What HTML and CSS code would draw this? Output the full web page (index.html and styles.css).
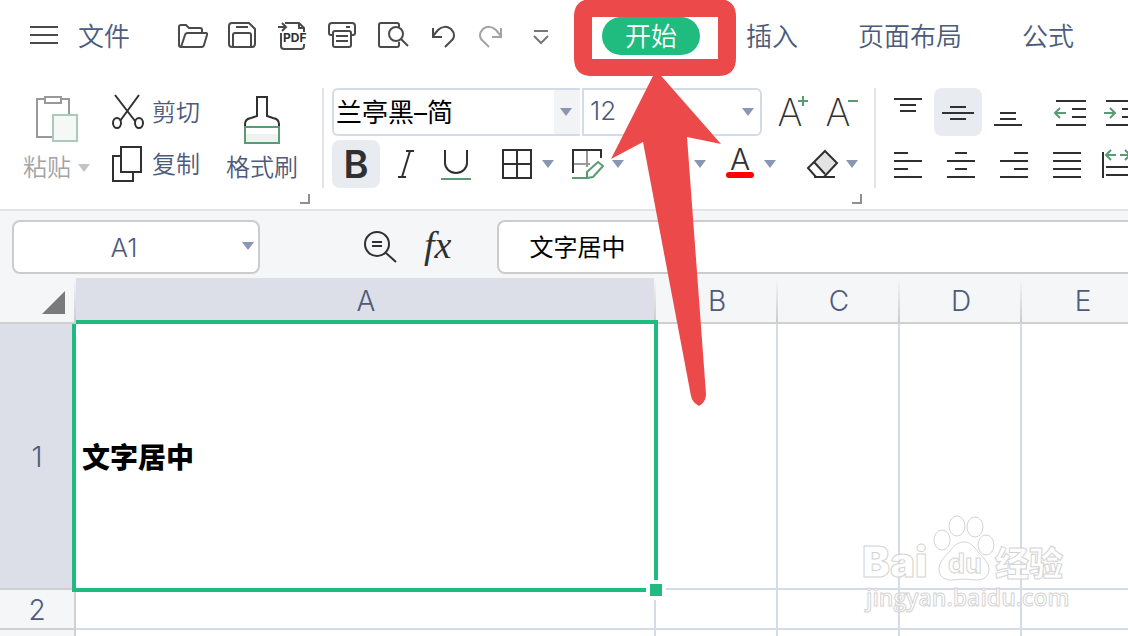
FILE: index.html
```html
<!DOCTYPE html>
<html lang="zh-CN">
  <head>
    <meta charset="UTF-8" />
    <meta name="viewport" content="width=device-width, initial-scale=1.0" />
    <title>表格</title>
    <link rel="stylesheet" href="styles.css">
  </head>
  <body>
    <header class="topbar">
      <button class="menu-btn">
        <svg class="icon" width="28" height="30" viewBox="0 0 28 30"><path d="M0 6h28M0 14h28M0 22h28" /></svg>
        <span class="label">文件</span>
      </button>

      <div class="quick">
        <button aria-label="打开">
          <svg class="icon" width="30" height="30" viewBox="0 0 30 30"><path d="M3 26c-1.500 0-2-1-2-2V6q0-2 2-2h5l3 3h11q2 0 2 2v3M3 26L7 14q.5-2 2.500-2H28q1.500 0 1 2l-3 10q-.5 2-2.500 2z" /></svg>
        </button>
        <button aria-label="保存">
          <svg class="icon" width="30" height="30" viewBox="0 0 30 30"><path d="M4 2h17l6 6v15q0 3-3 3H4q-3 0-3-3V5q0-3 3-3zM5 26V14q0-2 2-2h14q2 0 2 2v12M8 6h12" /></svg>
        </button>
        <button aria-label="输出为PDF">
          <svg class="icon" width="30" height="30" viewBox="0 0 30 30">
            <path d="M7 2h14l5 5v4M21 2v5h5M3 12v13q0 3 3 3h17q3 0 3-3v-2M0 6h8M4 2l4 4-4 4" />
            <text class="pdf-text" x="5" y="21">PDF</text>
          </svg>
        </button>
        <button aria-label="打印">
          <svg class="icon" width="30" height="30" viewBox="0 0 30 30"><path d="M5 14H3q-2 0-2-2V5q0-3 3-3h20q3 0 3 3v7q0 2-2 2h-2M7 10h14q2 0 2 2v12q0 2-2 2H7q-2 0-2-2V12q0-2 2-2zM8 15h12M8 20h12M18 6h4" /></svg>
        </button>
        <button aria-label="打印预览">
          <svg class="icon" width="30" height="30" viewBox="0 0 30 30"><path d="M21 7V4q0-2-2-2H3Q1 2 1 4v20q0 2 2 2h16q2 0 2-2v-3" /><circle cx="18" cy="13" r="7" /><path d="M23 18l7 7" /></svg>
        </button>
        <button aria-label="撤销">
          <svg class="icon" width="30" height="30" viewBox="0 0 30 30"><path d="M5 7v9h9M5 15l5-6c4-4 9-4 13-1 4 4 4 9 0 12l-6 6" /></svg>
        </button>
        <button aria-label="恢复" disabled>
          <svg class="icon" width="30" height="30" viewBox="0 0 30 30"><path d="M23 7v9h-9M23 15l-5-6C14 5 9 5 5 8c-4 4-4 9 0 12l6 6" /></svg>
        </button>
        <button aria-label="更多">
          <svg class="icon more" width="30" height="30" viewBox="0 0 30 30"><path d="M6 10h14M6 15l7 7 7-7" /></svg>
        </button>
      </div>

      <nav class="tabs">
        <button class="tab active"><span class="label">开始</span></button>
        <button class="tab"><span class="label">插入</span></button>
        <button class="tab"><span class="label">页面布局</span></button>
        <button class="tab"><span class="label">公式</span></button>
      </nav>
    </header>

    <section class="ribbon">
      <div class="group clipboard">
        <button class="big-btn" disabled>
          <svg class="icon paste" width="42" height="48" viewBox="0 0 42 48">
            <path d="M9 3H1v38h16M25 3h8v16M9 1h16v6H9z" />
            <path class="mint" d="M17 19h24v26H17z" />
          </svg>
          <span class="with-caret">粘贴<i class="caret"></i></span>
        </button>
        <div class="stack">
          <button class="small-btn">
            <svg class="icon dark" width="32" height="36" viewBox="0 0 32 36"><path d="M3 1l20 26M27 1L8 27" /><ellipse cx="5" cy="29" rx="4" ry="5" /><ellipse cx="27" cy="29" rx="4" ry="5" /></svg>
            <span class="label">剪切</span>
          </button>
          <button class="small-btn">
            <svg class="icon dark" width="32" height="36" viewBox="0 0 32 36"><path d="M9 1h20v25H9zM9 10H1v25h20v-9" /></svg>
            <span class="label">复制</span>
          </button>
        </div>
        <button class="big-btn">
          <svg class="icon dark" width="36" height="48" viewBox="0 0 36 48">
            <path class="brush-fill" d="M2 38h32v8H2z" />
            <path d="M1 31v-3q0-5 6-6l6-2V1h10v19l6 2q6 1 6 6v3" />
            <path class="green" d="M1 31h34v16H1z" />
          </svg>
          <span>格式刷</span>
        </button>
        <i class="launcher"></i>
      </div>

      <div class="group font">
        <div class="row">
          <label class="combo family">
            <select aria-label="字体"><option>兰亭黑–简</option></select>
            <i class="caret"></i>
          </label>
          <label class="combo size">
            <select aria-label="字号"><option>12</option></select>
            <i class="caret"></i>
          </label>
          <button class="grow-btn" aria-label="增大字号">
            <svg class="icon dark" width="32" height="40" viewBox="0 0 32 40"><text class="letter" x="12" y="34">A</text><path class="green" d="M20 9h10M25 4v10" /></svg>
          </button>
          <button class="grow-btn" aria-label="减小字号">
            <svg class="icon dark" width="32" height="40" viewBox="0 0 32 40"><text class="letter" x="12" y="34">A</text><path class="green" d="M22 9h10" /></svg>
          </button>
        </div>
        <div class="row">
          <div class="styles">
            <button class="tool on bold">B</button>
            <button class="tool" aria-label="倾斜">
              <svg class="icon dark" width="16" height="30" viewBox="0 0 16 30"><path d="M8 2h8M0 28h8M12 2L4 28" /></svg>
            </button>
            <button class="tool" aria-label="下划线">
              <svg class="icon dark" width="30" height="32" viewBox="0 0 30 32"><path d="M4 2v13a11 10 0 0 0 22 0V2" /><path class="green" d="M0 31h30" /></svg>
            </button>
          </div>
          <div class="pair">
            <button class="split" aria-label="边框">
              <svg class="icon dark" width="30" height="32" viewBox="0 0 30 32"><path d="M1 2h28v28H1zM15 2v28M1 16h28" /></svg>
              <i class="caret"></i>
            </button>
            <button class="split" aria-label="绘图边框">
              <svg class="icon dark" width="30" height="32" viewBox="0 0 30 32">
                <path class="gray" d="M15 3v16M2 16h16" />
                <path d="M1 25V2h28v8" />
                <path class="green" d="M0 30h15M15 24L26 14l5 4-10 11-6 1z" />
              </svg>
              <i class="caret"></i>
            </button>
          </div>
          <div class="pair">
            <button class="split" aria-label="填充颜色">
              <svg class="icon dark" width="30" height="32" viewBox="0 0 30 32"><path d="M13 4l10 10-9 9-9-9zM4 30h22" /></svg>
              <i class="caret"></i>
            </button>
            <button class="split" aria-label="字体颜色">
              <svg class="icon dark" width="30" height="32" viewBox="0 0 30 32"><text class="letter small" x="16" y="22">A</text><path class="red" d="M5 27h22" /></svg>
              <i class="caret"></i>
            </button>
          </div>
          <button class="split clear" aria-label="清除">
            <svg class="icon dark" width="32" height="32" viewBox="0 0 32 32"><path class="eraser" d="M19 3l12 12-12 12L8 14z" /><path d="M19 3l12 12-13 14H10L2 20zM8 14l11 12M8 29h21" /></svg>
            <i class="caret"></i>
          </button>
        </div>
        <i class="launcher"></i>
      </div>

      <div class="group align">
        <div class="row">
          <button class="tool" aria-label="顶端对齐">
            <svg class="icon dark" width="28" height="32" viewBox="0 0 28 32"><path d="M0 3h28M6 9h16M6 15h16" /></svg>
          </button>
          <button class="tool on" aria-label="垂直居中">
            <svg class="icon dark" width="32" height="32" viewBox="0 0 32 32"><path d="M8 11h16M0 17h32M8 23h16" /></svg>
          </button>
          <button class="tool" aria-label="底端对齐">
            <svg class="icon dark" width="28" height="32" viewBox="0 0 28 32"><path d="M6 17h16M6 23h16M0 29h28" /></svg>
          </button>
          <button class="tool indent" aria-label="减少缩进量">
            <svg class="icon dark" width="32" height="32" viewBox="0 0 32 32"><path d="M2 5h30M18 13h14M18 21h14M2 29h30" /><path class="green" d="M12 17H1M6 12l-5 5 5 5" /></svg>
          </button>
          <button class="tool" aria-label="增加缩进量">
            <svg class="icon dark" width="32" height="32" viewBox="0 0 32 32"><path d="M2 5h30M18 13h14M18 21h14M2 29h30" /><path class="green" d="M0 17h11M6 12l5 5-5 5" /></svg>
          </button>
        </div>
        <div class="row wide">
          <button class="tool" aria-label="左对齐">
            <svg class="icon dark" width="28" height="32" viewBox="0 0 28 32"><path d="M0 5h14M0 13h28M0 21h14M0 29h28" /></svg>
          </button>
          <button class="tool" aria-label="水平居中">
            <svg class="icon dark" width="28" height="32" viewBox="0 0 28 32"><path d="M8 5h12M0 13h28M8 21h12M0 29h28" /></svg>
          </button>
          <button class="tool" aria-label="右对齐">
            <svg class="icon dark" width="28" height="32" viewBox="0 0 28 32"><path d="M14 5h14M0 13h28M14 21h14M0 29h28" /></svg>
          </button>
          <button class="tool" aria-label="两端对齐">
            <svg class="icon dark" width="28" height="32" viewBox="0 0 28 32"><path d="M0 5h28M0 13h28M0 21h28M0 29h28" /></svg>
          </button>
          <button class="tool" aria-label="分散对齐">
            <svg class="icon dark" width="36" height="32" viewBox="0 0 36 32"><path d="M1 4v26M35 4v26M4 19h28M4 27h28" /><path class="green" d="M14 7H5M9 2L4 7l5 5M18 7h9M23 2l5 5-5 5" /></svg>
          </button>
        </div>
      </div>
    </section>

    <section class="formula-bar">
      <label class="name-box">
        <input type="text" value="A1" aria-label="名称框" />
        <i class="caret"></i>
      </label>
      <div class="formula-tools">
        <button aria-label="浏览公式结果">
          <svg class="icon dark" width="32" height="32" viewBox="0 0 32 32"><circle cx="13" cy="13" r="12" /><path d="M22 22l10 9M8 11h10M8 15h10" /></svg>
        </button>
        <button class="fx">fx</button>
      </div>
      <input class="formula-input" type="text" value="文字居中" aria-label="编辑栏" />
    </section>

    <main class="sheet">
      <table>
        <colgroup>
          <col class="col-head" />
          <col class="col-a" />
          <col class="col" /><col class="col" /><col class="col" /><col class="col" />
        </colgroup>
        <thead>
          <tr>
            <th class="corner"><svg width="23" height="23" viewBox="0 0 23 23"><path d="M23 0v23H0z" /></svg></th>
            <th class="selected">A</th>
            <th>B</th>
            <th>C</th>
            <th>D</th>
            <th>E</th>
          </tr>
        </thead>
        <tbody>
          <tr class="tall">
            <th class="selected">1</th>
            <td class="current">文字居中<div class="selection"></div></td>
            <td></td><td></td><td></td><td></td>
          </tr>
          <tr>
            <th>2</th>
            <td></td><td></td><td></td><td></td><td></td>
          </tr>
          <tr>
            <th></th>
            <td></td><td></td><td></td><td></td><td></td>
          </tr>
        </tbody>
      </table>
    </main>

    <!-- red frame and arrow pointing at the active tab -->
    <svg class="pointer" width="170" height="410" viewBox="570 0 170 410">
      <path fill-rule="evenodd" d="M592 -1H718Q736 -1 736 17V58Q736 76 718 76H592Q574 76 574 58V17Q574 -1 592 -1zM592 17V59H718V17z" />
      <path d="M656 70L721 144 687 137 706 394Q706 402 699 406 692 402 691 396L643 142 611 159z" />
    </svg>

    <svg class="watermark" width="208" height="104" viewBox="0 0 208 104">
      <text class="wm-logo" x="0" y="65">Bai</text>
      <ellipse cx="80" cy="28" rx="8" ry="10" />
      <ellipse cx="95" cy="14" rx="8" ry="10" />
      <ellipse cx="113" cy="15" rx="8" ry="10" />
      <ellipse cx="124" cy="33" rx="8" ry="10" />
      <path d="M102 30c7 0 11 6 14 10s11 9 11 17-6 11-12 11c-5 0-9-1-13-1s-8 1-13 1c-7 0-12-4-12-11s6-12 10-17 8-10 15-10z" />
      <text class="wm-du" x="86" y="61">du</text>
      <text class="wm-cn" x="133" y="64">经验</text>
      <text class="wm-url" x="4" y="94">jingyan.baidu.com</text>
    </svg>
  </body>
</html>
```

FILE: styles.css
```css
* {
  margin: 0;
  padding: 0;
  box-sizing: border-box;
}

body {
  height: 100vh;
  display: flex;
  flex-direction: column;
  position: relative;
  overflow: hidden;
  background: #fff;
  color: #4c5b7b;
  font-family: "Inter", "Noto Sans CJK SC", sans-serif;
  font-weight: 350;
}

button,
input,
select {
  font: inherit;
  color: inherit;
  border: none;
  background: transparent;
  outline: none;
}

button {
  display: flex;
  align-items: center;
  justify-content: center;
  flex-shrink: 0;
  white-space: nowrap;
  cursor: pointer;
}

.label {
  padding-bottom: 4px;
}

/* icons */
.icon {
  display: block;
  flex-shrink: 0;
  fill: none;
  stroke: #4a4a4a;
  stroke-width: 2;
  overflow: visible;
}

.icon.dark {
  stroke: #303032;
}

.icon.more {
  stroke: #777;
}

.icon .green {
  stroke: #5a9b74;
}

.icon .gray {
  stroke: #999;
}

.icon .mint {
  stroke: #a9cbb8;
  fill: #f4f9f7;
}

.icon .red {
  stroke: #f00;
  stroke-width: 6;
  stroke-linecap: round;
}

.icon .brush-fill {
  fill: #edf3ef;
  stroke: none;
}

.icon .eraser {
  fill: #e3e3e3;
  stroke: none;
}

.icon text {
  stroke: none;
  fill: #303032;
}

.icon .letter {
  font-size: 38px;
  font-weight: 200;
  text-anchor: middle;
}

.icon .letter.small {
  font-size: 30px;
  font-weight: 300;
}

.icon .pdf-text {
  font-size: 12px;
  font-weight: 700;
}

.icon.paste {
  stroke: #999;
}

.caret {
  flex-shrink: 0;
  width: 12px;
  height: 8px;
  background: #8997b3;
  clip-path: polygon(0 0, 100% 0, 50% 100%);
}

/* top bar */
.topbar {
  display: flex;
  align-items: center;
  height: 72px;
  padding-left: 30px;
  font-size: 26px;
  flex-shrink: 0;
}

.menu-btn {
  gap: 20px;
}

.quick {
  display: flex;
  gap: 20px;
  margin-left: 48px;
}

.quick button:disabled {
  opacity: 0.5;
}

.tabs {
  display: flex;
  gap: 14px;
  margin-left: 44px;
}

.tab {
  height: 38px;
  padding: 0 23px;
  border-radius: 19px;
}

.tab.active {
  margin-right: 9px;
  background: #20bb7e;
  color: #fff;
}

/* ribbon */
.ribbon {
  display: flex;
  flex-shrink: 0;
  padding: 16px 0 21px 23px;
  border-bottom: 2px solid #e1e3e9;
  font-size: 24px;
}

.group {
  display: flex;
  flex-shrink: 0;
  position: relative;
}

.clipboard {
  padding-right: 24px;
  border-right: 2px solid #e4e4e6;
}

.font,
.align {
  flex-direction: column;
  gap: 4px;
  padding-left: 8px;
}

.font {
  padding-right: 16px;
  border-right: 2px solid #e4e4e6;
}

.launcher {
  position: absolute;
  right: 12px;
  bottom: -16px;
  width: 10px;
  height: 10px;
  border: solid #8f8f8f;
  border-width: 0 2px 2px 0;
}

.big-btn {
  flex-direction: column;
  justify-content: space-between;
  padding-top: 8px;
  line-height: 40px;
}

.big-btn:disabled {
  color: #a3a3a5;
}

.big-btn:disabled .caret {
  background: #c4c4c6;
}

.with-caret {
  display: flex;
  align-items: center;
  gap: 7px;
}

.stack {
  display: grid;
  gap: 4px;
  margin: 0 26px 0 22px;
}

.small-btn {
  gap: 8px;
  height: 48px;
}

.row {
  display: flex;
  align-items: center;
  height: 48px;
}

.combo {
  display: flex;
  position: relative;
  height: 48px;
  border: 2px solid #d3dbe9;
  background: #fff;
}

.combo select {
  width: 100%;
  padding-left: 6px;
  padding-bottom: 4px;
  appearance: none;
  font-size: 26px;
}

.combo .caret {
  position: absolute;
  right: 8px;
  top: 18px;
}

.family {
  width: 248px;
  border-radius: 6px 0 0 6px;
  border-right: none;
  margin-right: 2px;
  background: linear-gradient(to left, #f1f3f5 26px, #fff 26px);
}

.family select {
  padding-left: 2px;
  padding-bottom: 0;
  color: #000;
  font-weight: 400;
}

.size {
  width: 180px;
  border-radius: 0 6px 6px 0;
}

.size .caret {
  right: 6px;
}

.grow-btn {
  margin-left: 16px;
}

.tool {
  width: 48px;
  height: 48px;
  border-radius: 8px;
}

.tool.on {
  background: #e8ebf0;
}

.bold {
  color: #303032;
  font-size: 38px;
  font-weight: 600;
}

.styles {
  display: flex;
  gap: 2px;
  margin-right: 22px;
}

.pair {
  display: flex;
  gap: 18px;
  margin-right: 30px;
}

.split {
  gap: 10px;
}

.split.clear {
  gap: 8px;
}

.align .row {
  gap: 2px;
}

.align .row.wide {
  gap: 5px;
}

.indent {
  margin-left: 12px;
}

/* formula bar */
.formula-bar {
  display: flex;
  flex-shrink: 0;
  padding: 9px 0 4px 12px;
  background: #f5f6f8;
}

.name-box {
  display: flex;
  position: relative;
  width: 248px;
  flex-shrink: 0;
}

.name-box input {
  width: 100%;
  height: 54px;
  padding-right: 24px;
  border: 2px solid #ccc;
  border-radius: 8px;
  background: #fff;
  font-size: 26px;
  text-align: center;
}

.name-box .caret {
  position: absolute;
  right: 6px;
  top: 22px;
}

.formula-tools {
  display: flex;
  align-items: center;
  gap: 28px;
  margin: 0 46px 0 104px;
}

.fx {
  color: #303032;
  font-family: "Liberation Serif", serif;
  font-size: 38px;
  font-style: italic;
  line-height: 38px;
  padding-bottom: 4px;
}

.formula-input {
  flex: 1;
  min-width: 0;
  height: 54px;
  padding-left: 30px;
  padding-bottom: 4px;
  border: 2px solid #ccc;
  border-right: none;
  border-radius: 8px 0 0 8px;
  background: #fff;
  color: #000;
  font-size: 24px;
  font-weight: 400;
}

/* sheet */
.sheet {
  flex: 1;
  min-height: 0;
  overflow: hidden;
}

table {
  width: 1144px;
  min-width: 100%;
  table-layout: fixed;
  border-collapse: separate;
  border-spacing: 0;
}

.col-head {
  width: 76px;
}

.col-a {
  width: 580px;
}

.col {
  width: 122px;
}

th {
  position: relative;
  height: 40px;
  padding-top: 2px;
  background: #f5f6f8;
  font-size: 28px;
  font-weight: 300;
  line-height: 36px;
}

thead th {
  height: 46px;
  border-bottom: 2px solid #d0d0d0;
  background: linear-gradient(#f5f6f8, #ccc) right / 2px 100% no-repeat #f5f6f8;
}

tbody th {
  border-right: 2px solid #d0d0d0;
  border-bottom: 2px solid #d0d0d0;
}

th.selected {
  background-color: #dddfe8;
}

th.corner {
  z-index: 2;
  padding: 0 11px 0 0;
  text-align: right;
}

.corner svg {
  display: inline-block;
  vertical-align: middle;
  fill: #7a7a7a;
}

td {
  border-right: 2px solid #d5dbe8;
  border-bottom: 2px solid #d5dbe8;
}

.tall th {
  height: 266px;
}

.current {
  position: relative;
  padding-left: 6px;
  color: #000;
  font-size: 28px;
  font-weight: 900;
}

.selection {
  position: absolute;
  z-index: 1;
  inset: -4px;
  border: 4px solid #20bb7e;
}

.selection::after {
  content: "";
  position: absolute;
  right: -8px;
  bottom: -8px;
  width: 12px;
  height: 12px;
  background: #20bb7e;
  box-shadow: 0 0 0 4px #fff;
}

/* overlays */
.pointer {
  position: absolute;
  z-index: 3;
  left: 570px;
  top: 0;
  fill: #ec4a4a;
}

.watermark {
  position: absolute;
  z-index: 3;
  right: 58px;
  bottom: 20px;
  overflow: visible;
  fill: rgba(255, 255, 255, 0.8);
  stroke: #d4d4d4;
  stroke-width: 1;
}

.wm-logo {
  font-size: 42px;
  font-weight: 900;
}

.wm-du {
  font-size: 27px;
  font-weight: 700;
}

.wm-cn {
  font-size: 34px;
  font-weight: 900;
}

.wm-url {
  font-family: "Open Sans", sans-serif;
  font-size: 23px;
  font-weight: 600;
}
```
